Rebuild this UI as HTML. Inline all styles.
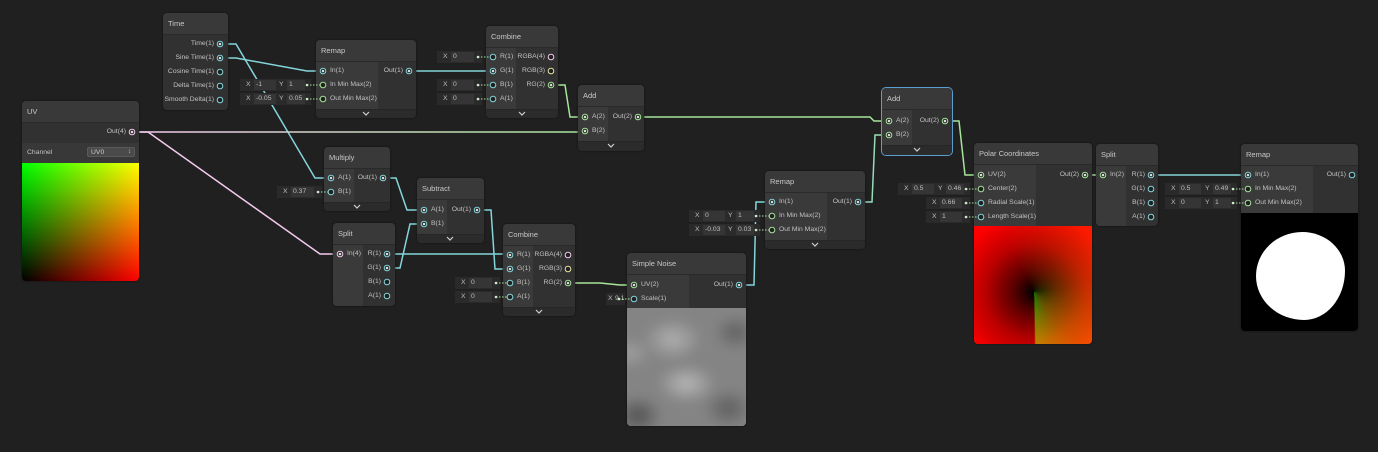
<!DOCTYPE html>
<html><head><meta charset="utf-8"><style>
body{margin:0;width:1378px;height:452px;background:#202020;overflow:hidden;position:relative;font-family:"Liberation Sans",sans-serif}
.n{position:absolute;background:#313131;border-radius:4px;overflow:hidden;box-shadow:0 0 2px #111}
.h{position:absolute;left:0;top:0;right:0;height:21px;background:#393939;color:#c8c8c8;font-size:7.5px;line-height:21px;padding-left:5px;border-bottom:1px solid #2a2a2a}
.ic{position:absolute;left:0;top:22px;background:#3a3a3a}
.ft{position:absolute;left:0;right:0;background:#2b2b2b;border-top:1px solid #262626}
.l{position:absolute;font-size:6.8px;color:#c2c2c2;line-height:10px;white-space:nowrap}
.r{text-align:right;width:90px}
.f{position:absolute;height:12px;background:#2a2a2a;font-size:6.8px;color:#bdbdbd;line-height:12px}
.f span{position:absolute;top:0}
.f i{position:absolute;top:1px;height:10px;line-height:10px;background:#353535;font-style:normal;padding-left:2px;box-sizing:border-box}
svg{position:absolute;left:0;top:0}
</style></head><body>
<svg width="1378" height="452" fill="none" stroke-width="1.5">
<defs><linearGradient id="pg" x1="0" x2="1" y1="0" y2="0"><stop offset="0" stop-color="#f4c9ee"/><stop offset="1" stop-color="#a6e59a"/></linearGradient>
<linearGradient id="cg" x1="0" x2="1"><stop offset="0" stop-color="#84d6db"/><stop offset="1" stop-color="#a6e59a"/></linearGradient></defs>
<g stroke="#84d6db">
<path d="M220 44 H236 L315 178 H331"/>
<path d="M220 58 H236 L307 71 H323"/>
<path d="M409 71 H493"/>
<path d="M383 178 H396 L407 210 H424"/>
<path d="M387 254 H510 V255"/>
<path d="M387 268 H400 L410 224 H424"/>
<path d="M477 210 H491 L495 269 H510"/>
<path d="M739 285 H754 L756 202 H772"/>
<path d="M1151 175 H1248"/>
</g>
<g stroke="#a6e59a">
<path d="M551 85 H565 L570 117 H585"/>
<path d="M638 117 H870 L874 121 H889"/>
<path d="M945 121 H959 L965 175 H981"/>
<path d="M1085 175 H1103"/>
<path d="M568 283 H600 L620 285 H634"/>
</g>
<path d="M858 202 H872 L875 135 H889" stroke="url(#cg)"/>
<path d="M132 132 H585 V131" stroke="url(#pg)"/>
<path d="M132 132 H148 L320 254 H340" stroke="#f4c9ee"/>
</svg>

<!-- Time -->
<div class="n" style="left:163px;top:13px;width:65px;height:97px"><div class="h">Time</div></div>
<div class="l r" style="left:124px;top:39px">Time(1)</div>
<div class="l r" style="left:124px;top:53px">Sine Time(1)</div>
<div class="l r" style="left:124px;top:67px">Cosine Time(1)</div>
<div class="l r" style="left:124px;top:81px">Delta Time(1)</div>
<div class="l r" style="left:124px;top:95px">Smooth Delta(1)</div>

<!-- UV -->
<div class="n" style="left:22px;top:101px;width:117px;height:180px"><div class="h">UV</div>
<div style="position:absolute;left:0;top:42px;width:117px;height:20px;background:#383838"></div>
<div style="position:absolute;left:0;top:62px;width:117px;height:118px;background:linear-gradient(to right,#000,#f00),linear-gradient(to bottom,#0f0,#000);background-blend-mode:screen"></div></div>
<div class="l r" style="left:36px;top:127px">Out(4)</div>
<div class="l" style="left:27px;top:148px">Channel</div>
<div style="position:absolute;left:87px;top:147px;width:48px;height:10px;background:#4a4a4a;border:1px solid #5a5a5a;border-radius:2px;font-size:6.8px;color:#ccc;line-height:9px;padding-left:3px;box-sizing:border-box">UV0<span style="position:absolute;right:3px;top:0;font-size:6px">&#8597;</span></div>

<!-- Remap1 -->
<div class="n" style="left:316px;top:40px;width:100px;height:78px"><div class="h">Remap</div><div class="ic" style="width:62px;height:47px"></div><div class="ft" style="top:69px;height:9px"></div></div>
<div class="l" style="left:330px;top:66px">In(1)</div>
<div class="l" style="left:330px;top:80px">In Min Max(2)</div>
<div class="l" style="left:330px;top:94px">Out Min Max(2)</div>
<div class="l r" style="left:313px;top:66px">Out(1)</div>
<div class="f" style="left:240px;top:79px;width:71px"><span style="left:6px">X</span><i style="left:14px;width:22px">-1</i><span style="left:39px">Y</span><i style="left:47px;width:18px">1</i></div>
<div class="f" style="left:240px;top:93px;width:71px"><span style="left:6px">X</span><i style="left:14px;width:22px">-0.05</i><span style="left:39px">Y</span><i style="left:47px;width:18px">0.05</i></div>

<!-- Combine1 -->
<div class="n" style="left:486px;top:26px;width:72px;height:92px"><div class="h">Combine</div><div class="ic" style="width:30px;height:61px"></div><div class="ft" style="top:83px;height:9px"></div></div>
<div class="l" style="left:500px;top:52px">R(1)</div><div class="l" style="left:500px;top:66px">G(1)</div><div class="l" style="left:500px;top:80px">B(1)</div><div class="l" style="left:500px;top:94px">A(1)</div>
<div class="l r" style="left:455px;top:52px">RGBA(4)</div><div class="l r" style="left:455px;top:66px">RGB(3)</div><div class="l r" style="left:455px;top:80px">RG(2)</div>
<div class="f" style="left:437px;top:51px;width:45px"><span style="left:6px">X</span><i style="left:14px;width:23px">0</i></div>
<div class="f" style="left:437px;top:79px;width:45px"><span style="left:6px">X</span><i style="left:14px;width:23px">0</i></div>
<div class="f" style="left:437px;top:93px;width:45px"><span style="left:6px">X</span><i style="left:14px;width:23px">0</i></div>

<!-- Add1 -->
<div class="n" style="left:578px;top:85px;width:66px;height:66px"><div class="h">Add</div><div class="ic" style="width:30px;height:34px"></div><div class="ft" style="top:56px;height:10px"></div></div>
<div class="l" style="left:592px;top:112px">A(2)</div><div class="l" style="left:592px;top:126px">B(2)</div>
<div class="l r" style="left:542px;top:112px">Out(2)</div>

<!-- Multiply -->
<div class="n" style="left:324px;top:147px;width:66px;height:64px"><div class="h">Multiply</div><div class="ic" style="width:30px;height:33px"></div><div class="ft" style="top:55px;height:9px"></div></div>
<div class="l" style="left:338px;top:173px">A(1)</div><div class="l" style="left:338px;top:187px">B(1)</div>
<div class="l r" style="left:287px;top:173px">Out(1)</div>
<div class="f" style="left:277px;top:186px;width:45px"><span style="left:6px">X</span><i style="left:14px;width:23px">0.37</i></div>

<!-- Subtract -->
<div class="n" style="left:417px;top:178px;width:67px;height:65px"><div class="h">Subtract</div><div class="ic" style="width:30px;height:34px"></div><div class="ft" style="top:56px;height:9px"></div></div>
<div class="l" style="left:431px;top:205px">A(1)</div><div class="l" style="left:431px;top:219px">B(1)</div>
<div class="l r" style="left:381px;top:205px">Out(1)</div>

<!-- Split1 -->
<div class="n" style="left:333px;top:223px;width:62px;height:83px"><div class="h">Split</div><div class="ic" style="width:30px;height:61px"></div></div>
<div class="l" style="left:347px;top:249px">In(4)</div>
<div class="l r" style="left:291px;top:249px">R(1)</div><div class="l r" style="left:291px;top:263px">G(1)</div><div class="l r" style="left:291px;top:277px">B(1)</div><div class="l r" style="left:291px;top:291px">A(1)</div>

<!-- Combine2 -->
<div class="n" style="left:503px;top:224px;width:72px;height:92px"><div class="h">Combine</div><div class="ic" style="width:30px;height:61px"></div><div class="ft" style="top:83px;height:9px"></div></div>
<div class="l" style="left:517px;top:250px">R(1)</div><div class="l" style="left:517px;top:264px">G(1)</div><div class="l" style="left:517px;top:278px">B(1)</div><div class="l" style="left:517px;top:292px">A(1)</div>
<div class="l r" style="left:472px;top:250px">RGBA(4)</div><div class="l r" style="left:472px;top:264px">RGB(3)</div><div class="l r" style="left:472px;top:278px">RG(2)</div>
<div class="f" style="left:455px;top:277px;width:45px"><span style="left:6px">X</span><i style="left:14px;width:23px">0</i></div>
<div class="f" style="left:455px;top:291px;width:45px"><span style="left:6px">X</span><i style="left:14px;width:23px">0</i></div>

<!-- Simple Noise -->
<div class="n" style="left:627px;top:253px;width:119px;height:173px"><div class="h">Simple Noise</div><div class="ic" style="width:62px;height:33px"></div>
<div style="position:absolute;left:0;top:55px;width:119px;height:118px;overflow:hidden;background:#808080"><div style="position:absolute;left:-10px;top:-10px;width:139px;height:138px;background:
radial-gradient(ellipse 30px 22px at 40% 30%,#b0b0b0,transparent),
radial-gradient(ellipse 30px 20px at 50% 62%,#b8b8b8,transparent),
radial-gradient(ellipse 22px 18px at 85% 25%,#606060,transparent),
radial-gradient(ellipse 25px 20px at 15% 85%,#505050,transparent),
radial-gradient(ellipse 25px 20px at 80% 80%,#5e5e5e,transparent),
radial-gradient(ellipse 20px 16px at 10% 40%,#a0a0a0,transparent),
#848484;filter:blur(5px)"></div></div></div>
<div class="l" style="left:641px;top:280px">UV(2)</div><div class="l" style="left:641px;top:294px">Scale(1)</div>
<div class="l r" style="left:643px;top:280px">Out(1)</div>
<div class="f" style="left:606px;top:293px;width:19px"><span style="left:2px">X</span><span style="left:9px">9.1</span></div>

<!-- Remap2 -->
<div class="n" style="left:765px;top:171px;width:100px;height:78px"><div class="h">Remap</div><div class="ic" style="width:62px;height:47px"></div><div class="ft" style="top:69px;height:9px"></div></div>
<div class="l" style="left:779px;top:197px">In(1)</div><div class="l" style="left:779px;top:211px">In Min Max(2)</div><div class="l" style="left:779px;top:225px">Out Min Max(2)</div>
<div class="l r" style="left:762px;top:197px">Out(1)</div>
<div class="f" style="left:689px;top:210px;width:71px"><span style="left:6px">X</span><i style="left:14px;width:22px">0</i><span style="left:39px">Y</span><i style="left:47px;width:18px">1</i></div>
<div class="f" style="left:689px;top:224px;width:71px"><span style="left:6px">X</span><i style="left:14px;width:22px">-0.03</i><span style="left:39px">Y</span><i style="left:47px;width:18px">0.03</i></div>

<!-- Add2 selected -->
<div class="n" style="left:882px;top:88px;width:70px;height:67px;box-shadow:0 0 0 1px #5a9fd0"><div class="h">Add</div><div class="ic" style="width:30px;height:35px"></div><div class="ft" style="top:57px;height:10px"></div></div>
<div class="l" style="left:896px;top:116px">A(2)</div><div class="l" style="left:896px;top:130px">B(2)</div>
<div class="l r" style="left:849px;top:116px">Out(2)</div>

<!-- Polar -->
<div class="n" style="left:974px;top:143px;width:118px;height:201px"><div class="h">Polar Coordinates</div><div class="ic" style="width:62px;height:61px"></div>
<div style="position:absolute;left:0;top:83px;width:118px;height:118px;background:radial-gradient(circle at 51% 56%,#000 0,#500 22%,#b00 55%,#f00 90%),conic-gradient(from 180deg at 51% 56%,#000 0deg,#000 150deg,#110 200deg,#0a2a00 260deg,#305000 320deg,#0a8000 358deg,#000 360deg);background-blend-mode:screen"></div></div>
<div class="l" style="left:988px;top:170px">UV(2)</div><div class="l" style="left:988px;top:184px">Center(2)</div><div class="l" style="left:988px;top:198px">Radial Scale(1)</div><div class="l" style="left:988px;top:212px">Length Scale(1)</div>
<div class="l r" style="left:989px;top:170px">Out(2)</div>
<div class="f" style="left:898px;top:183px;width:72px"><span style="left:6px">X</span><i style="left:14px;width:22px">0.5</i><span style="left:40px">Y</span><i style="left:48px;width:18px">0.46</i></div>
<div class="f" style="left:926px;top:197px;width:44px"><span style="left:6px">X</span><i style="left:14px;width:22px">0.66</i></div>
<div class="f" style="left:926px;top:211px;width:44px"><span style="left:6px">X</span><i style="left:14px;width:22px">1</i></div>

<!-- Split2 -->
<div class="n" style="left:1096px;top:144px;width:62px;height:82px"><div class="h">Split</div><div class="ic" style="width:30px;height:60px"></div></div>
<div class="l" style="left:1110px;top:170px">In(2)</div>
<div class="l r" style="left:1055px;top:170px">R(1)</div><div class="l r" style="left:1055px;top:184px">G(1)</div><div class="l r" style="left:1055px;top:198px">B(1)</div><div class="l r" style="left:1055px;top:212px">A(1)</div>

<!-- Remap3 -->
<div class="n" style="left:1241px;top:144px;width:117px;height:187px"><div class="h">Remap</div><div class="ic" style="width:72px;height:47px"></div>
<div style="position:absolute;left:0;top:69px;width:117px;height:118px;background:#000">
<div style="position:absolute;left:15px;top:19px;width:89px;height:88px;background:#fff;border-radius:52% 48% 46% 54%/50% 44% 56% 50%"></div></div></div>
<div class="l" style="left:1255px;top:170px">In(1)</div><div class="l" style="left:1255px;top:184px">In Min Max(2)</div><div class="l" style="left:1255px;top:198px">Out Min Max(2)</div>
<div class="l r" style="left:1256px;top:170px">Out(1)</div>
<div class="f" style="left:1165px;top:183px;width:72px"><span style="left:6px">X</span><i style="left:14px;width:22px">0.5</i><span style="left:40px">Y</span><i style="left:48px;width:18px">0.49</i></div>
<div class="f" style="left:1165px;top:197px;width:72px"><span style="left:6px">X</span><i style="left:14px;width:22px">0</i><span style="left:40px">Y</span><i style="left:48px;width:18px">1</i></div>

<!-- ports, field connectors, chevrons -->
<svg width="1378" height="452" fill="none" stroke-width="1">
<g stroke="#a6e59a" stroke-dasharray="1.5 1.5">
<path d="M307 85H323M307 99H323M478 57H493M478 85H493M478 99H493M318 192H331M496 283H510M496 297H510M619 299H634M756 216H772M756 230H772M966 189H981M966 203H981M966 217H981M1233 189H1248M1233 203H1248"/>
</g>
<g fill="#cfe8cf" stroke="none">
<circle cx="307" cy="85" r="1.3"/><circle cx="307" cy="99" r="1.3"/><circle cx="478" cy="57" r="1.3"/><circle cx="478" cy="85" r="1.3"/><circle cx="478" cy="99" r="1.3"/><circle cx="318" cy="192" r="1.3"/><circle cx="496" cy="283" r="1.3"/><circle cx="496" cy="297" r="1.3"/><circle cx="619" cy="299" r="1.3"/><circle cx="756" cy="216" r="1.3"/><circle cx="756" cy="230" r="1.3"/><circle cx="966" cy="189" r="1.3"/><circle cx="966" cy="203" r="1.3"/><circle cx="966" cy="217" r="1.3"/><circle cx="1233" cy="189" r="1.3"/><circle cx="1233" cy="203" r="1.3"/>
</g>
<g stroke="#84d6db" fill="#202020">
<circle cx="220" cy="44" r="2.8"/><circle cx="220" cy="58" r="2.8"/><circle cx="220" cy="72" r="2.8"/><circle cx="220" cy="86" r="2.8"/><circle cx="220" cy="100" r="2.8"/>
<circle cx="323" cy="71" r="2.8"/><circle cx="409" cy="71" r="2.8"/>
<circle cx="493" cy="57" r="2.8"/><circle cx="493" cy="71" r="2.8"/><circle cx="493" cy="85" r="2.8"/><circle cx="493" cy="99" r="2.8"/>
<circle cx="331" cy="178" r="2.8"/><circle cx="331" cy="192" r="2.8"/><circle cx="383" cy="178" r="2.8"/>
<circle cx="424" cy="210" r="2.8"/><circle cx="424" cy="224" r="2.8"/><circle cx="477" cy="210" r="2.8"/>
<circle cx="387" cy="254" r="2.8"/><circle cx="387" cy="268" r="2.8"/><circle cx="387" cy="282" r="2.8"/><circle cx="387" cy="296" r="2.8"/>
<circle cx="510" cy="255" r="2.8"/><circle cx="510" cy="269" r="2.8"/><circle cx="510" cy="283" r="2.8"/><circle cx="510" cy="297" r="2.8"/>
<circle cx="634" cy="299" r="2.8"/><circle cx="739" cy="285" r="2.8"/>
<circle cx="772" cy="202" r="2.8"/><circle cx="858" cy="202" r="2.8"/>
<circle cx="981" cy="203" r="2.8"/><circle cx="981" cy="217" r="2.8"/>
<circle cx="1151" cy="175" r="2.8"/><circle cx="1151" cy="189" r="2.8"/><circle cx="1151" cy="203" r="2.8"/><circle cx="1151" cy="217" r="2.8"/>
<circle cx="1248" cy="175" r="2.8"/><circle cx="1352" cy="175" r="2.8"/>
</g>
<g stroke="#a6e59a" fill="#202020">
<circle cx="551" cy="85" r="2.8"/><circle cx="568" cy="283" r="2.8"/>
<circle cx="585" cy="117" r="2.8"/><circle cx="585" cy="131" r="2.8"/><circle cx="638" cy="117" r="2.8"/>
<circle cx="634" cy="285" r="2.8"/><circle cx="772" cy="216" r="2.8"/><circle cx="772" cy="230" r="2.8"/>
<circle cx="889" cy="121" r="2.8"/><circle cx="889" cy="135" r="2.8"/><circle cx="945" cy="121" r="2.8"/>
<circle cx="981" cy="175" r="2.8"/><circle cx="981" cy="189" r="2.8"/><circle cx="1085" cy="175" r="2.8"/><circle cx="1103" cy="175" r="2.8"/>
<circle cx="323" cy="85" r="2.8"/><circle cx="323" cy="99" r="2.8"/><circle cx="1248" cy="189" r="2.8"/><circle cx="1248" cy="203" r="2.8"/>
</g>
<g stroke="#f4c9ee" fill="#202020"><circle cx="132" cy="132" r="2.8"/><circle cx="340" cy="254" r="2.8"/><circle cx="551" cy="57" r="2.8"/><circle cx="568" cy="255" r="2.8"/></g>
<g stroke="#e6e3a0" fill="#202020"><circle cx="551" cy="71" r="2.8"/><circle cx="568" cy="269" r="2.8"/></g>
<g fill="#dcdcdc" stroke="none">
<circle cx="220" cy="44" r="1.3"/><circle cx="220" cy="58" r="1.3"/><circle cx="323" cy="71" r="1.3"/><circle cx="409" cy="71" r="1.3"/><circle cx="493" cy="71" r="1.3"/><circle cx="551" cy="85" r="1.3"/><circle cx="585" cy="117" r="1.3"/><circle cx="585" cy="131" r="1.3"/><circle cx="638" cy="117" r="1.3"/><circle cx="132" cy="132" r="1.3"/><circle cx="331" cy="178" r="1.3"/><circle cx="383" cy="178" r="1.3"/><circle cx="424" cy="210" r="1.3"/><circle cx="424" cy="224" r="1.3"/><circle cx="477" cy="210" r="1.3"/><circle cx="340" cy="254" r="1.3"/><circle cx="387" cy="254" r="1.3"/><circle cx="387" cy="268" r="1.3"/><circle cx="510" cy="255" r="1.3"/><circle cx="510" cy="269" r="1.3"/><circle cx="568" cy="283" r="1.3"/><circle cx="634" cy="285" r="1.3"/><circle cx="739" cy="285" r="1.3"/><circle cx="772" cy="202" r="1.3"/><circle cx="858" cy="202" r="1.3"/><circle cx="889" cy="121" r="1.3"/><circle cx="889" cy="135" r="1.3"/><circle cx="945" cy="121" r="1.3"/><circle cx="981" cy="175" r="1.3"/><circle cx="1085" cy="175" r="1.3"/><circle cx="1103" cy="175" r="1.3"/><circle cx="1151" cy="175" r="1.3"/><circle cx="1248" cy="175" r="1.3"/>
</g>
<g stroke="#d0d0d0" stroke-width="1.2">
<path d="M363 112l3 3 3-3"/><path d="M519 112l3 3 3-3"/><path d="M608 144l3 3 3-3"/><path d="M354 205l3 3 3-3"/><path d="M447 237l3 3 3-3"/><path d="M536 310l3 3 3-3"/><path d="M812 243l3 3 3-3"/><path d="M914 148l3 3 3-3"/>
</g>
</svg>
</body></html>
